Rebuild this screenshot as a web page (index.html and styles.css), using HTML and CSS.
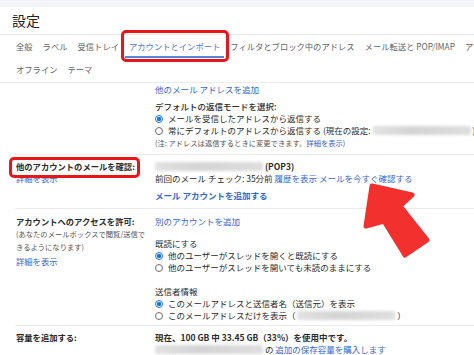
FILE: index.html
```html
<!DOCTYPE html>
<html lang="ja">
<head>
    <meta charset="UTF-8">
    <meta name="viewport" content="width=device-width, initial-scale=1.0">
    <title>設定 - アカウントとインポート</title>
    <link rel="stylesheet" href="styles.css">
</head>
<body>
    <div class="page">
        <div class="topbar"></div>
        <h1 class="title">設定</h1>

        <nav class="tabs">
            <div class="tab-row">
                <span class="tab">全般</span>
                <span class="tab">ラベル</span>
                <span class="tab">受信トレイ</span>
                <span class="tab active">アカウントとインポート</span>
                <span class="tab">フィルタとブロック中のアドレス</span>
                <span class="tab">メール転送と POP/IMAP</span>
                <span class="tab">アドオン</span>
            </div>
            <div class="tab-row second">
                <span class="tab">オフライン</span>
                <span class="tab">テーマ</span>
            </div>
        </nav>

        <section class="row first">
            <div class="label"></div>
            <div class="value">
                <div class="line"><a class="link">他のメール アドレスを追加</a></div>
                <div class="line heading gap-s">デフォルトの返信モードを選択:</div>
                <div class="line"><span class="radio checked"></span>メールを受信したアドレスから返信する</div>
                <div class="line"><span class="radio"></span>常にデフォルトのアドレスから返信する (現在の設定: <span class="blur w-l"></span> )</div>
                <div class="line note">(注: アドレスは返信するときに変更できます。<a class="link">詳細を表示</a>)</div>
            </div>
        </section>

        <section class="row second-row">
            <div class="label">
                <div class="line strong">他のアカウントのメールを確認:</div>
                <div class="line"><a class="link">詳細を表示</a></div>
            </div>
            <div class="value">
                <div class="line"><span class="blur w-m"></span> <span class="strong">(POP3)</span></div>
                <div class="line tall">前回のメール チェック: 35分前 <a class="link">履歴を表示</a> <a class="link">メールを今すぐ確認する</a></div>
                <div class="line gap-xs"><a class="link strong">メール アカウントを追加する</a></div>
            </div>
        </section>

        <section class="row third-row">
            <div class="label">
                <div class="line strong">アカウントへのアクセスを許可:</div>
                <div class="sub">(あなたのメールボックスで閲覧/送信できるようになります)</div>
                <div class="line"><a class="link">詳細を表示</a></div>
            </div>
            <div class="value">
                <div class="line"><a class="link">別のアカウントを追加</a></div>
                <div class="line gap-m">既読にする</div>
                <div class="line"><span class="radio checked"></span>他のユーザーがスレッドを開くと既読にする</div>
                <div class="line"><span class="radio"></span>他のユーザーがスレッドを開いても未読のままにする</div>
                <div class="line gap-l">送信者情報</div>
                <div class="line"><span class="radio checked"></span>このメールアドレスと送信者名（送信元）を表示</div>
                <div class="line"><span class="radio"></span>このメールアドレスだけを表示（ <span class="blur w-l"></span> ）</div>
            </div>
        </section>

        <section class="row last-row">
            <div class="label">
                <div class="line strong">容量を追加する:</div>
            </div>
            <div class="value">
                <div class="line strong">現在、100 GB 中 33.45 GB（33%）を使用中です。</div>
                <div class="line"><span class="blur w-m"></span> の <a class="link">追加の保存容量を購入します</a></div>
            </div>
        </section>

        <!-- annotations -->
        <div class="mark mark-tab"></div>
        <div class="mark mark-label"></div>
        <svg class="arrow" width="474" height="355" viewBox="0 0 474 355">
            <polygon points="372,186 412,195 400,206 427,240 405,255 384,221 366,226"
                     fill="#f2302e" stroke="#f2302e" stroke-width="5" stroke-linejoin="round"/>
        </svg>
    </div>
</body>
</html>
```

FILE: styles.css
```css
* { margin: 0; padding: 0; box-sizing: border-box; }
html, body {
    width: 474px;
    height: 355px;
    overflow: hidden;
    background: white;
}
body {
    font-family: "Noto Sans CJK JP", "Noto Sans", sans-serif;
    font-size: 8.5px;
    color: #2a2a2a;
}
.page {
    position: relative;
    width: 474px;
    height: 355px;
    overflow: hidden;
    white-space: nowrap;
}
.topbar {
    height: 7px;
    background: #f3f5f9;
}
.title {
    height: 28px;
    line-height: 27px;
    padding-left: 12px;
    font-size: 14px;
    font-weight: 400;
    color: #222;
    border-bottom: 1px solid #ebebeb;
}
.tabs {
    border-bottom: 1px solid #ececec;
    padding-left: 12px;
}
.tab-row {
    display: flex;
    height: 23px;
}
.tab-row.second {
    height: 24px;
    line-height: 24px;
}
.tab {
    display: block;
    padding: 0 4px;
    margin-right: 2px;
    line-height: 23px;
    color: #5f6368;
    font-size: 8.3px;
}
.tab.active {
    color: #4f79cf;
    border-bottom: 2px solid #5b84d6;
    line-height: 22px;
}
.row {
    display: flex;
    margin-left: 15px;
    border-top: 1px solid #ebebeb;
}
.row.first {
    border-top: none;
    padding-bottom: 5px;
}
.row.second-row {
    padding: 5px 0 7px;
}
.row.third-row {
    padding: 6px 0 4px;
}
.row.last-row {
    padding-top: 5px;
}
.label {
    width: 140px;
    padding-left: 1px;
    flex-shrink: 0;
    font-size: 8.3px;
}
.value {
    flex: 1;
}
.line {
    height: 12px;
    line-height: 12px;
}
.line.tall { height: 13px; line-height: 13px; }
.line.heading { font-weight: 500; }
.gap-xs { margin-top: 4px; }
.gap-s { margin-top: 5px; }
.gap-m { margin-top: 10px; }
.gap-l { margin-top: 12px; }
.strong { font-weight: 700; }
.note {
    font-size: 7.3px;
    color: #555;
    margin-top: 1px;
}
.sub {
    white-space: normal;
    width: 134px;
    font-size: 7.3px;
    line-height: 13px;
    color: #555;
    margin-top: 1px;
    margin-bottom: 1px;
}
.link {
    color: #3567d2;
    text-decoration: none;
}
.radio {
    display: inline-block;
    vertical-align: -1px;
    width: 8px;
    height: 8px;
    border: 1px solid #6b6b6b;
    border-radius: 50%;
    margin-right: 5px;
}
.radio.checked {
    border-color: #1a73e8;
    background: radial-gradient(circle, #1a73e8 0 2px, white 2.4px);
}
.blur {
    display: inline-block;
    vertical-align: -1px;
    height: 9px;
    background: linear-gradient(90deg, #e2e2e2, #d4d4d4 40%, #dedede);
    filter: blur(1.5px);
    border-radius: 2px;
}
.w-m { width: 108px; }
.w-l { width: 98px; }
.mark {
    position: absolute;
    border: 3px solid #e8151b;
    border-radius: 5px;
}
.mark-tab {
    left: 121px;
    top: 30px;
    width: 108px;
    height: 32px;
}
.mark-label {
    left: 9px;
    top: 157px;
    width: 131px;
    height: 21px;
}
.arrow {
    position: absolute;
    left: 0;
    top: 0;
}
```
